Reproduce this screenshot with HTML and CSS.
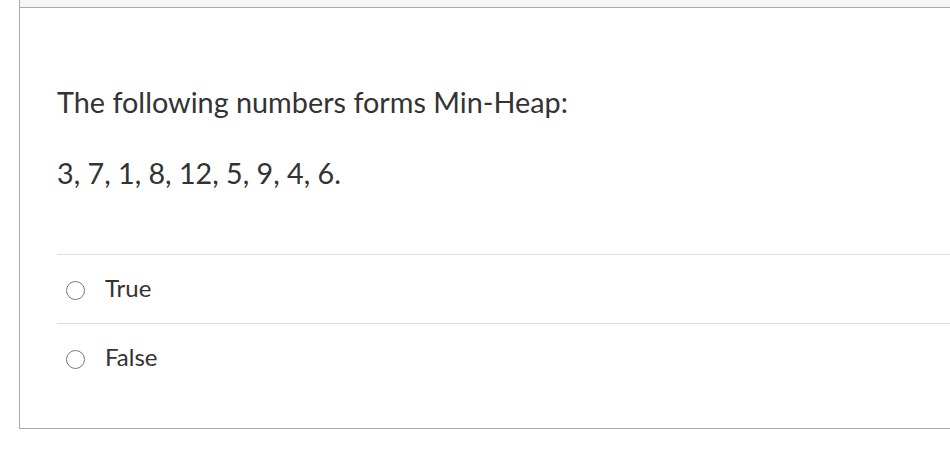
FILE: index.html
```html
<!DOCTYPE html>
<html>
<head>
<meta charset="utf-8">
<link rel="stylesheet" href="styles.css">
</head>
<body>
<div class="question">
  <div class="question-header"></div>
  <div class="question-body">
    <p class="prompt">The following numbers forms Min-Heap:</p>
    <p class="numbers">3, 7, 1, 8, 12, 5, 9, 4, 6.</p>
    <div class="answers">
      <label class="answer"><span class="radio"></span><span class="answer-text">True</span></label>
      <label class="answer"><span class="radio"></span><span class="answer-text">False</span></label>
    </div>
  </div>
</div>
</body>
</html>
```

FILE: styles.css
```css
html, body {
  margin: 0;
  padding: 0;
  background: #ffffff;
  overflow: hidden;
}
body {
  font-family: Lato, "Liberation Sans", sans-serif;
  color: #333333;
}
.question {
  margin-left: 19px;
  width: 980px;
  border-left: 1px solid #aaaaaa;
  border-bottom: 1px solid #aaaaaa;
}
.question-header {
  height: 7px;
  background: #f5f5f5;
  border-bottom: 1px solid #aaaaaa;
}
.question-body {
  padding: 77px 0 36px 37px;
}
.prompt {
  margin: 0;
  font-size: 28.8px;
  line-height: 34px;
}
.numbers {
  margin: 37px 0 0 0;
  font-size: 28.7px;
  line-height: 34px;
}
.answers {
  margin-top: 64px;
}
.answer {
  display: flex;
  align-items: center;
  border-top: 1px solid #dddddd;
  padding: 21px 0 23px 9px;
  height: 24px;
}
.radio {
  box-sizing: border-box;
  width: 19px;
  height: 19px;
  border: 1.5px solid #7a7a7a;
  border-radius: 50%;
  margin-top: 4px;
  flex: none;
}
.answer-text {
  margin-left: 20px;
  font-size: 24px;
  line-height: 24px;
}
```
